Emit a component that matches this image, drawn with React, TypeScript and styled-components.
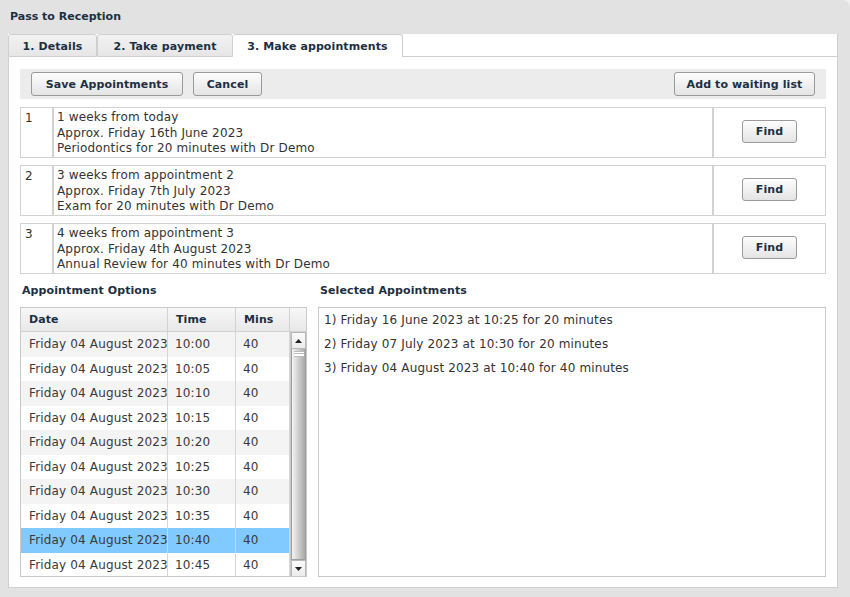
import React from "react";
import styled, { createGlobalStyle } from "styled-components";

const Global = createGlobalStyle`
  html, body { margin: 0; padding: 0; background: #f0f0f0; }
  body { font-family: "DejaVu Sans", Verdana, sans-serif; font-size: 12px; letter-spacing: 0.15px; color: #333; }
  * { box-sizing: border-box; }
`;

const Window = styled.div`
  width: 850px;
  height: 597px;
  background: #e2e2e2;
  border-top-right-radius: 8px;
  padding: 0 12px 0 8px;
  display: flex;
  flex-direction: column;
`;

const Title = styled.div`
  height: 34px;
  display: flex;
  align-items: center;
  padding-left: 2px;
  padding-bottom: 2px;
  font-weight: bold;
  font-size: 11px;
  letter-spacing: 0;
  color: #1d2f42;
`;

const TabStrip = styled.div`
  display: flex;
  height: 23px;
  background: #fff;
  border-right: 1px solid #cfcfcf;
`;

const Tab = styled.div<{ $active?: boolean; $w: number }>`
  width: ${(p) => p.$w}px;
  display: flex;
  align-items: center;
  justify-content: center;
  font-weight: bold;
  font-size: 11px;
  letter-spacing: 0.1px;
  color: #1d2f42;
  border: 1px solid #cfcfcf;
  border-left-width: ${(p) => (p.$active ? "0" : "1px")};
  background: ${(p) => (p.$active ? "#fff" : "linear-gradient(#f2f2f2, #e6e6e6)")};
  border-top-left-radius: 3px;
  border-top-right-radius: 3px;
  border-bottom: ${(p) => (p.$active ? "none" : "1px solid #cfcfcf")};
  padding-top: 1px;
`;

const TabFill = styled.div`
  flex: 1;
  border-bottom: 1px solid #cfcfcf;
`;

const Panel = styled.div`
  height: 531px;
  background: #fff;
  border: 1px solid #cfcfcf;
  border-top: none;
  padding: 12px 11px 10px 11px;
  display: flex;
  flex-direction: column;
`;

const Toolbar = styled.div`
  height: 30px;
  background: #ececec;
  display: flex;
  align-items: center;
  padding: 0 11px;
  gap: 10px;
`;

const Spacer = styled.div`
  flex: 1;
`;

const Button = styled.button<{ $w?: number }>`
  height: 24px;
  width: ${(p) => (p.$w ? `${p.$w}px` : "auto")};
  padding: 0;
  border: 1px solid #9a9a9a;
  border-radius: 3px;
  background: linear-gradient(#fdfdfd, #e4e4e4);
  box-shadow: inset 0 1px 0 #fff;
  font-family: "DejaVu Sans", Verdana, sans-serif;
  font-size: 11px;
  font-weight: bold;
  letter-spacing: 0.1px;
  color: #1d2f42;
  cursor: pointer;
`;

const FindButton = styled(Button)`
  width: 55px;
  height: 23px;
`;

const ApptList = styled.div`
  display: flex;
  flex-direction: column;
  gap: 7px;
  margin-top: 8px;
`;

const ApptRow = styled.div`
  height: 51px;
  display: flex;
  border: 1px solid #d2d2d2;
`;

const NumCell = styled.div`
  width: 33px;
  padding: 3px 0 0 4px;
  border-right: 2px solid #d2d2d2;
`;

const DescCell = styled.div`
  flex: 1;
  padding: 2px 0 0 3px;
  line-height: 15.7px;
  border-right: 2px solid #d2d2d2;
`;

const FindCell = styled.div`
  width: 111px;
  display: flex;
  align-items: center;
  justify-content: center;
  padding-bottom: 3px;
`;

const Bottom = styled.div`
  display: flex;
  gap: 11px;
  margin-top: 6px;
  flex: 1;
  min-height: 0;
`;

const Column = styled.div<{ $w?: number }>`
  display: flex;
  flex-direction: column;
  width: ${(p) => (p.$w ? `${p.$w}px` : "auto")};
  flex: ${(p) => (p.$w ? "none" : "1")};
`;

const SectionLabel = styled.div`
  height: 20px;
  display: flex;
  align-items: center;
  padding-left: 2px;
  font-weight: bold;
  font-size: 11px;
  letter-spacing: 0.1px;
  color: #1d2f42;
  margin-bottom: 7px;
`;

const Grid = styled.div`
  flex: 1;
  border: 1px solid #c9c9c9;
  display: grid;
  grid-template-columns: 147px 68px 54px 16px;
  grid-template-rows: 24px 1fr;
  overflow: hidden;
`;

const HeadCell = styled.div<{ $last?: boolean }>`
  background: linear-gradient(#f7f7f7, #e8e8e8);
  border-right: ${(p) => (p.$last ? "none" : "1px solid #d2d2d2")};
  border-bottom: 1px solid #d2d2d2;
  font-weight: bold;
  font-size: 11px;
  letter-spacing: 0.1px;
  color: #1d2f42;
  display: flex;
  align-items: center;
  padding-left: 8px;
`;

const Body = styled.div`
  grid-column: 1 / 4;
  display: flex;
  flex-direction: column;
`;

const Row = styled.div<{ $alt?: boolean; $sel?: boolean }>`
  height: 24.5px;
  flex: none;
  display: grid;
  grid-template-columns: 147px 68px 54px;
  background: ${(p) => (p.$sel ? "#80caff" : p.$alt ? "#f4f4f4" : "#fff")};
`;

const Cell = styled.div<{ $pad?: number }>`
  display: flex;
  align-items: center;
  padding-left: ${(p) => p.$pad ?? 7}px;
  border-right: 1px solid #d6d6d6;
  white-space: nowrap;
  overflow: hidden;
  color: #3a3a3a;
`;

const Scroll = styled.div`
  display: flex;
  flex-direction: column;
  border-left: 1px solid #c9c9c9;
  background: #f2f2f2;
`;

const Arrow = styled.div`
  height: 17px;
  flex: none;
  display: flex;
  align-items: center;
  justify-content: center;
  background: linear-gradient(#fafafa, #ececec);
  border: 1px solid #b8b8b8;
`;

const Thumb = styled.div`
  flex: 1;
  border: 1px solid #9e9e9e;
  border-top: none;
  background: linear-gradient(to right, #f4f4f4 0%, #d6d6d6 40%, #a8a8a8 100%);
  display: flex;
  flex-direction: column;
  align-items: center;
  padding-top: 2px;
`;

const Grip = styled.div`
  width: 10px;
  height: 6px;
  border-top: 1px solid #bbb;
  border-bottom: 1px solid #bbb;
  background: linear-gradient(#fff 0 33%, #bbb 33% 50%, #fff 50% 100%);
`;

const SelectedBox = styled.div`
  flex: 1;
  border: 1px solid #c9c9c9;
  padding: 0 0 0 5px;
`;

const SelLine = styled.div`
  height: 24px;
  display: flex;
  align-items: center;
  color: #333;
`;

const appts = [
  ["1", "1 weeks from today", "Approx. Friday 16th June 2023", "Periodontics for 20 minutes with Dr Demo"],
  ["2", "3 weeks from appointment 2", "Approx. Friday 7th July 2023", "Exam for 20 minutes with Dr Demo"],
  ["3", "4 weeks from appointment 3", "Approx. Friday 4th August 2023", "Annual Review for 40 minutes with Dr Demo"],
];

const times = ["10:00", "10:05", "10:10", "10:15", "10:20", "10:25", "10:30", "10:35", "10:40", "10:45"];

const selected = [
  "1) Friday 16 June 2023 at 10:25 for 20 minutes",
  "2) Friday 07 July 2023 at 10:30 for 20 minutes",
  "3) Friday 04 August 2023 at 10:40 for 40 minutes",
];

const Tri = ({ up }: { up?: boolean }) => (
  <svg width="7" height="4" viewBox="0 0 7 4">
    <path d={up ? "M0 4 L3.5 0 L7 4 Z" : "M0 0 L3.5 4 L7 0 Z"} fill="#222" />
  </svg>
);

export default function App() {
  return (
    <>
      <Global />
      <Window>
        <Title>Pass to Reception</Title>
        <TabStrip>
          <Tab $w={89}>1. Details</Tab>
          <Tab $w={136}>2. Take payment</Tab>
          <Tab $w={170} $active>3. Make appointments</Tab>
          <TabFill />
        </TabStrip>
        <Panel>
          <Toolbar>
            <Button $w={152}>Save Appointments</Button>
            <Button $w={69}>Cancel</Button>
            <Spacer />
            <Button $w={141}>Add to waiting list</Button>
          </Toolbar>
          <ApptList>
            {appts.map((a) => (
              <ApptRow key={a[0]}>
                <NumCell>{a[0]}</NumCell>
                <DescCell>
                  <div>{a[1]}</div>
                  <div>{a[2]}</div>
                  <div>{a[3]}</div>
                </DescCell>
                <FindCell>
                  <FindButton>Find</FindButton>
                </FindCell>
              </ApptRow>
            ))}
          </ApptList>
          <Bottom>
            <Column $w={287}>
              <SectionLabel>Appointment Options</SectionLabel>
              <Grid>
                <HeadCell>Date</HeadCell>
                <HeadCell>Time</HeadCell>
                <HeadCell>Mins</HeadCell>
                <HeadCell $last />
                <Body>
                  {times.map((t, i) => (
                    <Row key={t} $alt={i % 2 === 0} $sel={t === "10:40"}>
                      <Cell $pad={8}>Friday 04 August 2023</Cell>
                      <Cell>{t}</Cell>
                      <Cell>40</Cell>
                    </Row>
                  ))}
                </Body>
                <Scroll>
                  <Arrow>
                    <Tri up />
                  </Arrow>
                  <Thumb>
                    <Grip />
                  </Thumb>
                  <Arrow>
                    <Tri />
                  </Arrow>
                </Scroll>
              </Grid>
            </Column>
            <Column>
              <SectionLabel>Selected Appointments</SectionLabel>
              <SelectedBox>
                {selected.map((s) => (
                  <SelLine key={s}>{s}</SelLine>
                ))}
              </SelectedBox>
            </Column>
          </Bottom>
        </Panel>
      </Window>
    </>
  );
}
